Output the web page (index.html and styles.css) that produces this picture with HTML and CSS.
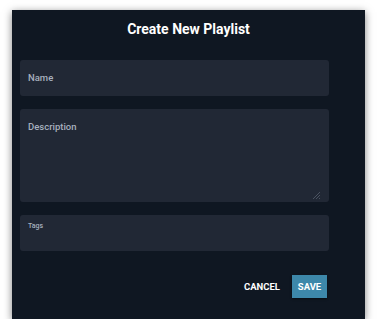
FILE: index.html
```html
<!DOCTYPE html>
<html lang="en">
<head>
    <meta charset="UTF-8">
    <meta name="viewport" content="width=device-width, initial-scale=1.0">
    <title>Create New Playlist</title>
    <link rel="stylesheet" href="styles.css">
</head>
<body>
    <div class="dialog">
        <h1 class="dialog-title">Create New Playlist</h1>

        <div class="fields">
            <div class="field field-name">
                <span class="field-label">Name</span>
            </div>
            <div class="field field-desc">
                <span class="field-label">Description</span>
                <svg class="resize" width="9" height="9" viewBox="0 0 9 9">
                    <path d="M8 1 L1 8 M8 4 L4 8 M8 7 L7 8" stroke="#4a5260" stroke-width="1"/>
                </svg>
            </div>
            <div class="field field-tags">
                <span class="field-label small">Tags</span>
            </div>
        </div>

        <div class="actions">
            <button class="btn btn-text">CANCEL</button>
            <button class="btn btn-primary">SAVE</button>
        </div>
    </div>
</body>
</html>
```

FILE: styles.css
```css
body {
    margin: 0;
    background: #fff;
    font-family: Roboto, "Liberation Sans", sans-serif;
}

.dialog {
    margin: 10px 0 0 12px;
    width: 353px;
    height: 309px;
    box-sizing: border-box;
    background: #0f1722;
    box-shadow: 0 2px 8px rgba(0, 0, 0, 0.5);
    display: flex;
    flex-direction: column;
    padding: 10px 36px 0 8px;
}

.dialog-title {
    margin: 0 0 0 28px;
    color: #fff;
    font-size: 14px;
    line-height: 18px;
    font-weight: 700;
    text-align: center;
}

.fields {
    margin-top: 22px;
    display: flex;
    flex-direction: column;
    gap: 13px;
}

.field {
    position: relative;
    background: #212835;
    border-radius: 3px;
    padding: 0 8px;
    display: flex;
}

.field-name {
    height: 36px;
    align-items: center;
}

.field-desc {
    height: 93px;
    padding-top: 12px;
    box-sizing: border-box;
    align-items: flex-start;
}

.field-tags {
    height: 36px;
    padding-top: 7px;
    box-sizing: border-box;
    align-items: flex-start;
}

.field-label {
    color: #a7b0be;
    font-size: 9.5px;
    line-height: 12px;
    font-weight: 500;
}

.field-label.small {
    font-size: 7px;
    line-height: 9px;
}

.resize {
    position: absolute;
    right: 8px;
    bottom: 2px;
}

.actions {
    margin-top: 24px;
    padding-right: 2px;
    display: flex;
    justify-content: flex-end;
    align-items: center;
    gap: 12px;
}

.btn {
    border: none;
    font-family: inherit;
    font-size: 9.5px;
    font-weight: 700;
    color: #fff;
    cursor: pointer;
    padding: 0;
}

.btn-text {
    background: none;
}

.btn-primary {
    background: #3d88aa;
    width: 35px;
    height: 23px;
    box-shadow: 0 1px 2px rgba(0, 0, 0, 0.5);
}
```
